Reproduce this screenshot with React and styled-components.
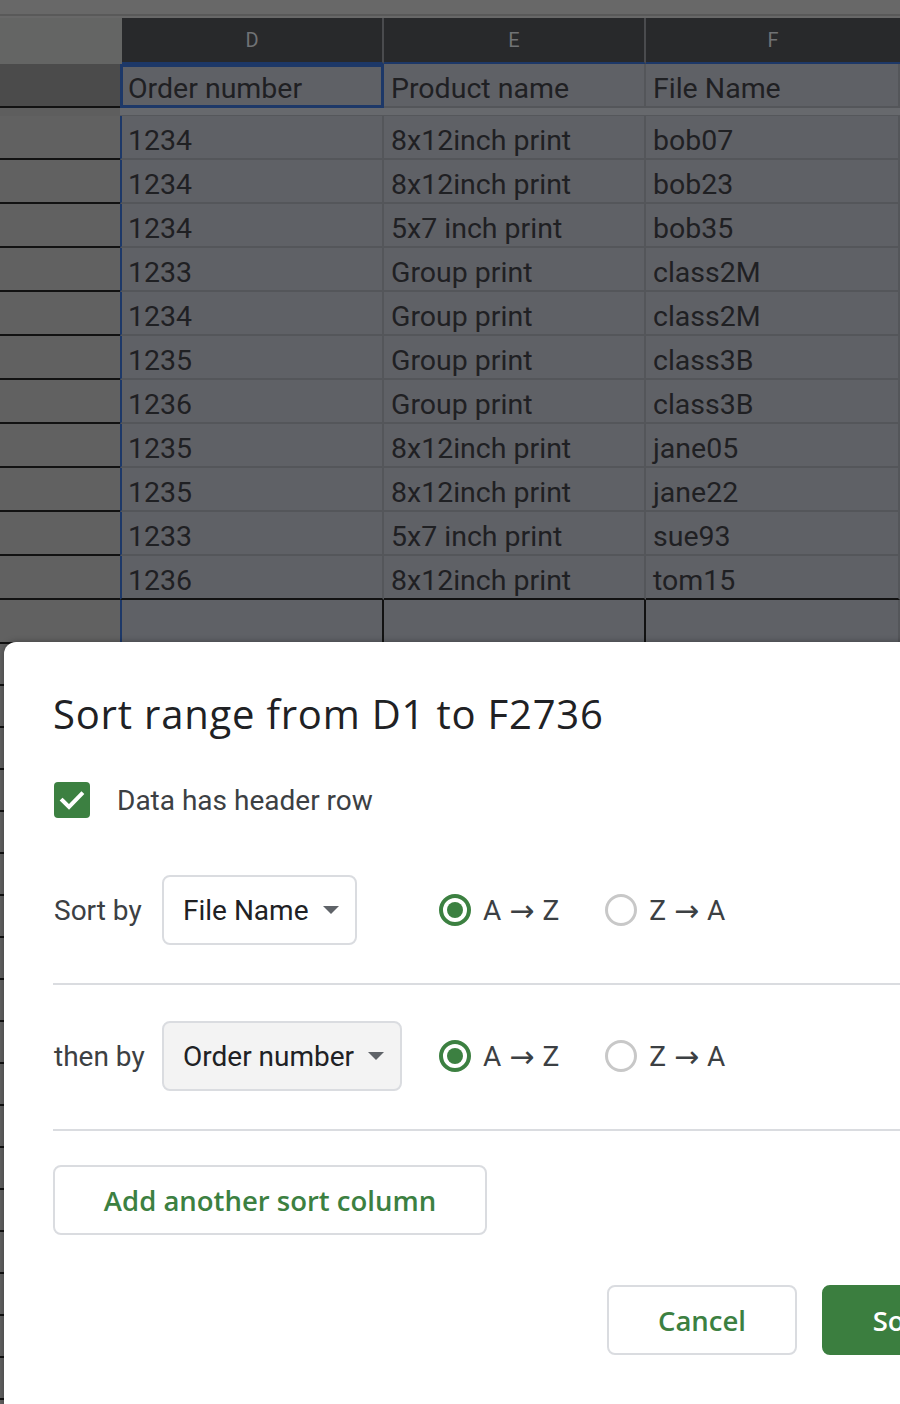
import React from "react";
import styled, { createGlobalStyle } from "styled-components";

const GlobalStyle = createGlobalStyle`
  body {
    margin: 0;
    background: #616161;
    font-family: Roboto, "Liberation Sans", sans-serif;
  }
`;

const rows = [
  ["1234", "8x12inch print", "bob07"],
  ["1234", "8x12inch print", "bob23"],
  ["1234", "5x7 inch print", "bob35"],
  ["1233", "Group print", "class2M"],
  ["1234", "Group print", "class2M"],
  ["1235", "Group print", "class3B"],
  ["1236", "Group print", "class3B"],
  ["1235", "8x12inch print", "jane05"],
  ["1235", "8x12inch print", "jane22"],
  ["1233", "5x7 inch print", "sue93"],
  ["1236", "8x12inch print", "tom15"],
];

const Direction = ({ from, to, on }) => (
  <RadioOption>
    <RadioCircle $on={on} />
    {from}
    <Arrow>→</Arrow>
    {to}
  </RadioOption>
);

const SortPage = () => {
  return (
    <>
      <GlobalStyle />
      <Page>
        <TopStrip />
        <SheetRow $h={46}>
          <Corner />
          <ColHead $w={262}>D</ColHead>
          <ColHead $w={262}>E</ColHead>
          <ColHead $w={254} $last>F</ColHead>
        </SheetRow>

        <SheetRow $h={44}>
          <RowHead $bg="#4b4b4b" />
          <SelectedCell>Order number</SelectedCell>
          <Cell $w={262}>Product name</Cell>
          <Cell $w={254}>File Name</Cell>
        </SheetRow>

        <FreezeBar>
          <FreezeHead />
          <FreezeBody />
        </FreezeBar>

        {rows.map((r, i) => (
          <SheetRow $h={44} key={i}>
            <RowHead />
            <Cell $w={264} $first $edge={i === rows.length - 1}>
              {r[0]}
            </Cell>
            <Cell $w={262} $edge={i === rows.length - 1}>
              {r[1]}
            </Cell>
            <Cell $w={254} $edge={i === rows.length - 1}>
              {r[2]}
            </Cell>
          </SheetRow>
        ))}

        <SheetRow $h={44}>
          <RowHead />
          <Cell $w={264} $first $dark />
          <Cell $w={262} $dark />
          <Cell $w={254} />
        </SheetRow>

        {Array.from({ length: 18 }).map((_, i) => (
          <SheetRow $h={42} key={"f" + i}>
            <RowHead />
          </SheetRow>
        ))}

        <Dialog>
          <Title>Sort range from D1 to F2736</Title>

          <CheckRow>
            <Checkbox>
              <svg width="36" height="36" viewBox="0 0 36 36">
                <path
                  d="M8.5 18.5l6.5 6.5 12.5-13"
                  fill="none"
                  stroke="#fff"
                  strokeWidth="4"
                  strokeLinecap="square"
                />
              </svg>
            </Checkbox>
            <CheckLabel>Data has header row</CheckLabel>
          </CheckRow>

          <SortRow $first>
            <SortLabel>Sort by</SortLabel>
            <Dropdown>
              File Name <Caret />
            </Dropdown>
            <RadioGroup>
              <Direction from="A" to="Z" on />
              <Direction from="Z" to="A" />
            </RadioGroup>
          </SortRow>

          <SortRow>
            <SortLabel>then by</SortLabel>
            <Dropdown $bg="#f3f3f3">
              Order number <Caret />
            </Dropdown>
            <RadioGroup>
              <Direction from="A" to="Z" on />
              <Direction from="Z" to="A" />
            </RadioGroup>
          </SortRow>

          <AddButton>Add another sort column</AddButton>

          <Footer>
            <OutlineButton>Cancel</OutlineButton>
            <PrimaryButton>Sort</PrimaryButton>
          </Footer>
        </Dialog>
      </Page>
    </>
  );
};

const Page = styled.div`
  position: relative;
  width: 900px;
  height: 1404px;
  overflow: hidden;
  background: #616161;
`;

const TopStrip = styled.div`
  height: 18px;
  background: linear-gradient(#686868 0 14px, #595959 14px 16px, #686868 16px);
`;

const SheetRow = styled.div`
  display: flex;
  height: ${(p) => p.$h}px;
`;

const Corner = styled.div`
  width: 122px;
  flex: none;
  background: #646564;
`;

const ColHead = styled.div`
  width: ${(p) => p.$w}px;
  flex: none;
  box-sizing: border-box;
  background: #28292b;
  border-right: ${(p) => (p.$last ? "none" : "2px solid #4a4b4e")};
  border-bottom: 2px solid #1d3868;
  color: #707275;
  font-size: 20px;
  display: flex;
  align-items: center;
  justify-content: center;
`;

const RowHead = styled.div`
  width: 120px;
  flex: none;
  box-sizing: border-box;
  background: ${(p) => p.$bg || "#616161"};
  border-bottom: 2px solid #121212;
`;

const Cell = styled.div`
  width: ${(p) => p.$w}px;
  flex: none;
  box-sizing: border-box;
  background: #5f6166;
  padding: 8px 0 0 ${(p) => (p.$first ? "6px" : "7px")};
  line-height: 34px;
  font-size: 28.5px;
  color: #1f2023;
  white-space: nowrap;
  overflow: hidden;
  border-left: ${(p) => (p.$first ? "2px solid #1d3868" : "none")};
  border-right: 2px solid ${(p) => (p.$dark ? "#121212" : "#54565a")};
  border-bottom: 2px solid ${(p) => (p.$edge ? "#121212" : "#54565a")};
`;

const SelectedCell = styled(Cell).attrs({ $w: 264 })`
  border: 3px solid #1d3868;
  padding: 5px 0 0 5px;
`;

const FreezeBar = styled.div`
  display: flex;
  height: 8px;
`;

const FreezeHead = styled.div`
  width: 120px;
  background: #5e5e5e;
`;

const FreezeBody = styled.div`
  flex: 1;
  background: #67696d;
  border-bottom: 1px solid #55575b;
`;

const Dialog = styled.div`
  position: absolute;
  left: 4px;
  top: 642px;
  width: 1022px;
  height: 800px;
  box-sizing: border-box;
  padding: 48px 48px 0 49px;
  background: #fff;
  border-top-left-radius: 12px;
  box-shadow: 0 0 6px rgba(0, 0, 0, 0.35);
`;

const Title = styled.h2`
  margin: 0;
  font-family: "Open Sans", Roboto, sans-serif;
  font-weight: 400;
  font-size: 40px;
  line-height: 48px;
  letter-spacing: 0.8px;
  color: #202124;
`;

const CheckRow = styled.div`
  display: flex;
  align-items: center;
  gap: 27px;
  margin-top: 44px;
  height: 36px;
  padding-left: 1px;
`;

const Checkbox = styled.div`
  width: 36px;
  height: 36px;
  border-radius: 4px;
  background: #3c8041;
  display: flex;
`;

const CheckLabel = styled.span`
  font-size: 28px;
  color: #3c4043;
`;

const SortRow = styled.div`
  display: grid;
  grid-template-columns: 109px 277px auto;
  align-items: center;
  margin-top: ${(p) => (p.$first ? "21px" : "0")};
  padding: 36px 0 38px;
  border-bottom: 2px solid #dadce0;
`;

const SortLabel = styled.span`
  font-size: 28px;
  color: #3c4043;
  padding-left: 1px;
`;

const Dropdown = styled.div`
  justify-self: start;
  display: inline-flex;
  align-items: center;
  gap: 14px;
  height: 70px;
  box-sizing: border-box;
  padding: 0 16px 0 19px;
  border: 2px solid #dadce0;
  border-radius: 8px;
  background: ${(p) => p.$bg || "#fff"};
  font-size: 28px;
  color: #202124;
`;

const Caret = styled.span`
  width: 0;
  height: 0;
  border-left: 8px solid transparent;
  border-right: 8px solid transparent;
  border-top: 8px solid #5f6368;
`;

const RadioGroup = styled.div`
  display: flex;
  align-items: center;
  gap: 46px;
`;

const RadioOption = styled.label`
  display: flex;
  align-items: center;
  gap: 12px;
  font-size: 28px;
  color: #3c4043;
`;

const Arrow = styled.span`
  font-family: "DejaVu Sans", sans-serif;
  font-size: 30px;
  margin: 0 -4px;
`;

const RadioCircle = styled.span`
  position: relative;
  width: 32px;
  height: 32px;
  box-sizing: border-box;
  border-radius: 50%;
  border: ${(p) => (p.$on ? "4px solid #3c8041" : "3px solid #c8c8c8")};

  &::after {
    content: "";
    display: ${(p) => (p.$on ? "block" : "none")};
    position: absolute;
    left: 4px;
    top: 4px;
    width: 16px;
    height: 16px;
    border-radius: 50%;
    background: #3c8041;
  }
`;

const AddButton = styled.button`
  display: block;
  margin-top: 34px;
  width: 434px;
  height: 70px;
  border: 2px solid #dadce0;
  border-radius: 8px;
  background: #fff;
  color: #3c8041;
  font-family: "Open Sans", Roboto, sans-serif;
  font-weight: 600;
  font-size: 27.5px;
`;

const Footer = styled.div`
  display: flex;
  justify-content: flex-end;
  gap: 25px;
  margin-top: 50px;
`;

const OutlineButton = styled.button`
  width: 190px;
  height: 70px;
  border: 2px solid #dadce0;
  border-radius: 8px;
  background: #fff;
  color: #3c8041;
  font-family: "Open Sans", Roboto, sans-serif;
  font-weight: 600;
  font-size: 27.5px;
`;

const PrimaryButton = styled(OutlineButton)`
  width: 156px;
  border-color: #3b7e3f;
  background: #3b7e3f;
  color: #fff;
`;

export default SortPage;
